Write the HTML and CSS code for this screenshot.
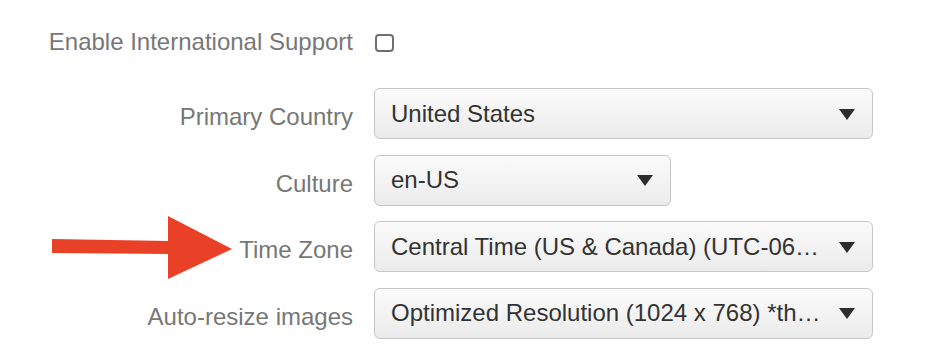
FILE: index.html
```html
<!DOCTYPE html>
<html lang="en">
<head>
<meta charset="utf-8">
<title>International Settings</title>
<link rel="stylesheet" href="styles.css">
</head>
<body>
<form class="form">
  <div class="row row-check">
    <label class="label" for="intl">Enable International Support</label>
    <div class="control"><span class="checkbox" id="intl" role="checkbox" aria-checked="false"></span></div>
  </div>
  <div class="row">
    <div class="label">Primary Country</div>
    <div class="control"><div class="select select-wide"><span class="value">United States</span><span class="caret"></span></div></div>
  </div>
  <div class="row">
    <div class="label">Culture</div>
    <div class="control"><div class="select select-narrow"><span class="value">en-US</span><span class="caret"></span></div></div>
  </div>
  <div class="row">
    <div class="label">Time Zone</div>
    <div class="control"><div class="select select-wide"><span class="value">Central Time (US &amp; Canada) (UTC-06…</span><span class="caret"></span></div></div>
  </div>
  <div class="row">
    <div class="label">Auto-resize images</div>
    <div class="control"><div class="select select-wide"><span class="value">Optimized Resolution (1024 x 768) *th…</span><span class="caret"></span></div></div>
  </div>
</form>
<svg class="annotation" width="200" height="70" viewBox="40 212 200 70" aria-hidden="true">
  <polygon points="52,239 170,241 170,254 52,253" fill="#e94128"/>
  <polygon points="168,216 232,249 168,279" fill="#e94128"/>
</svg>
</body>
</html>
```
FILE: styles.css
```css
html, body {
  margin: 0;
  padding: 0;
  background: #ffffff;
}
body {
  font-family: "Liberation Sans", Arial, Helvetica, sans-serif;
  font-size: 24px;
  position: relative;
  width: 928px;
  height: 356px;
  overflow: hidden;
}
.form {
  display: flex;
  flex-direction: column;
  gap: 15.5px;
  padding-top: 25px;
  margin: 0;
}
.row {
  display: flex;
  align-items: center;
  gap: 21px;
  height: 51px;
}
.row-check {
  height: 36px;
  margin-bottom: 11.5px;
}
.label {
  width: 353px;
  flex: none;
  text-align: right;
  color: #777777;
  padding-top: 7px;
  white-space: nowrap;
}
.row-check .label {
  padding-top: 0;
  padding-bottom: 2px;
}
.control {
  display: flex;
  align-items: center;
  height: 100%;
}
.checkbox {
  display: block;
  width: 15px;
  height: 14px;
  border: 2px solid #6f6f6f;
  border-radius: 4px;
  background: #fff;
  margin-left: 1px;
}
.select {
  box-sizing: border-box;
  height: 51px;
  display: flex;
  align-items: center;
  border: 1px solid #c6c6c6;
  border-radius: 6px;
  background: linear-gradient(#fbfbfb, #ebebeb);
  padding: 0 17px 0 16px;
  color: #333333;
}
.select-wide {
  width: 499px;
}
.select-narrow {
  width: 297px;
}
.value {
  flex: 1;
  white-space: nowrap;
  overflow: hidden;
}
.caret {
  flex: none;
  width: 0;
  height: 0;
  border-left: 8.5px solid transparent;
  border-right: 8.5px solid transparent;
  border-top: 11px solid #2d2d2d;
  margin-top: 1px;
}
.annotation {
  position: absolute;
  left: 40px;
  top: 212px;
}
```
